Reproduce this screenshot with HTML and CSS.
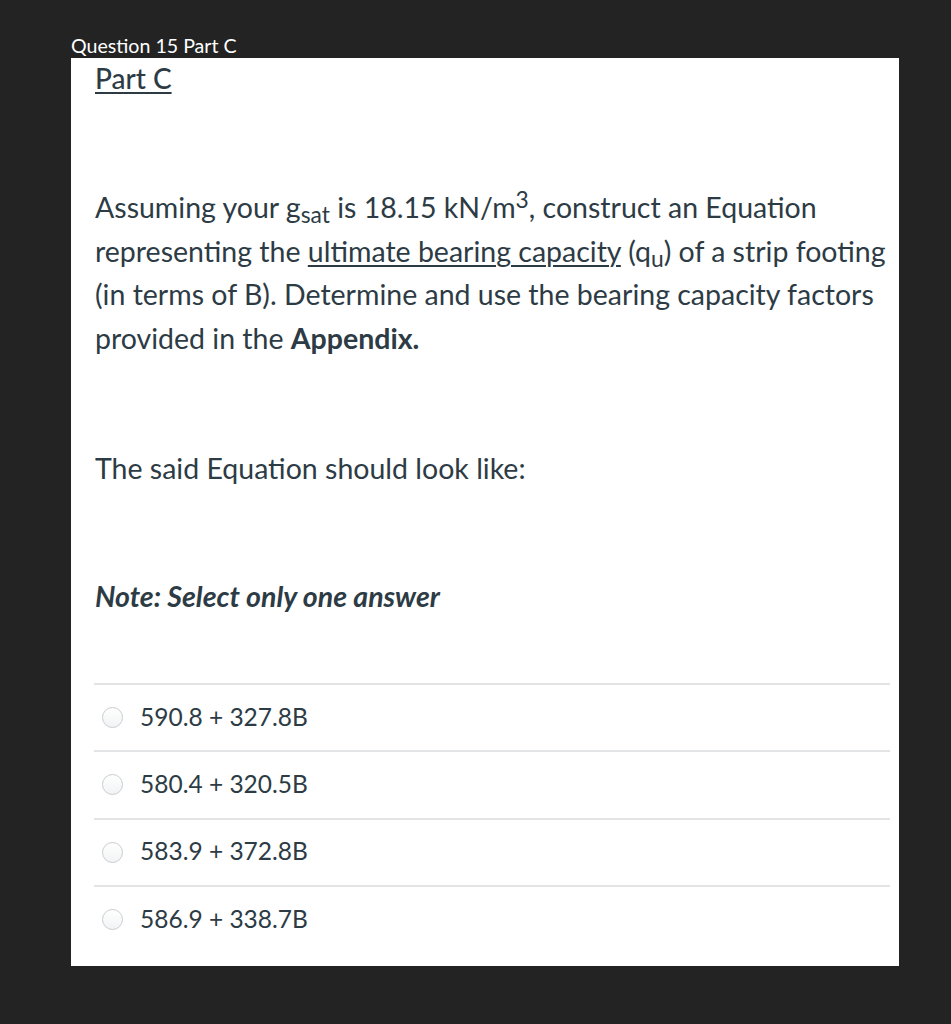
FILE: index.html
```html
<!DOCTYPE html>
<html lang="en">
<head>
<meta charset="utf-8">
<title>Question 15 Part C</title>
<link rel="stylesheet" href="styles.css">
</head>
<body>
<div class="page">
  <div class="q-title">Question 15 Part C</div>
  <div class="card">
    <h2 class="part">Part C</h2>
    <p class="text first">Assuming your g<sub>sat</sub> is 18.15 kN/m<sup>3</sup>, construct an Equation representing the <u>ultimate bearing capacity</u> (q<sub>u</sub>) of a strip footing (in terms of B). Determine and use the bearing capacity factors provided in the <strong>Appendix.</strong></p>
    <p class="text second">The said Equation should look like:</p>
    <p class="text note"><strong><em>Note: Select only one answer</em></strong></p>
    <ul class="answers">
      <li class="answer"><span class="radio"></span><span class="label">590.8 + 327.8B</span></li>
      <li class="answer"><span class="radio"></span><span class="label">580.4 + 320.5B</span></li>
      <li class="answer"><span class="radio"></span><span class="label">583.9 + 372.8B</span></li>
      <li class="answer"><span class="radio"></span><span class="label">586.9 + 338.7B</span></li>
    </ul>
  </div>
</div>
</body>
</html>
```

FILE: styles.css
```css
html, body {
  margin: 0;
  padding: 0;
  background: #232323;
}
.page {
  padding: 34px 0 0 71px;
  font-family: Lato, "Liberation Sans", sans-serif;
}
.q-title {
  color: #ffffff;
  font-size: 19.6px;
  line-height: 24px;
  height: 24px;
}
.card {
  width: 795px;
  background: #ffffff;
  padding: 3px 9px 14px 24px;
  color: #2d3b45;
}
.part {
  margin: 0;
  font-size: 28px;
  line-height: 34px;
  font-weight: 500;
  text-decoration: underline;
  text-decoration-thickness: 2px;
  text-underline-offset: 3px;
}
.text {
  margin: 0;
  font-size: 28.5px;
  line-height: 43.5px;
}
.text sub {
  font-size: 0.8em;
  line-height: 0;
  vertical-align: -0.22em;
}
.text sup {
  font-size: 0.8em;
  line-height: 0;
  vertical-align: 0.45em;
}
.text u {
  text-decoration-thickness: 2px;
  text-underline-offset: 3px;
}
.first {
  margin-top: 91px;
}
.second {
  margin-top: 87px;
}
.note {
  margin-top: 84px;
}
.answers {
  list-style: none;
  margin: 65px 0 0 -1px;
  padding: 0;
}
.answer {
  display: flex;
  align-items: center;
  height: 65.3px;
  border-top: 2px solid #e2e4e6;
}
.radio {
  width: 19px;
  height: 19px;
  border: 1px solid #c8cdd0;
  border-radius: 50%;
  background: linear-gradient(#ffffff, #f2f3f4);
  margin-left: 8px;
  margin-right: 17px;
  flex: none;
}
.label {
  font-size: 24.5px;
  line-height: 30px;
  padding-bottom: 2px;
}
```
